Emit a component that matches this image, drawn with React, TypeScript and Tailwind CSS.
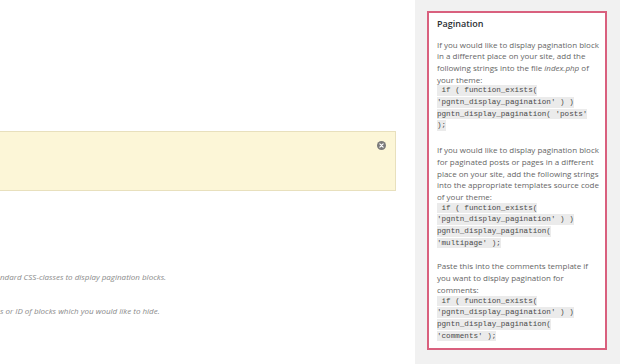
import React from 'react';

const CloseIcon = () => (
  <svg width="9" height="9" viewBox="0 0 10 10">
    <circle cx="5" cy="5" r="5" fill="#7a7a7a" />
    <path d="M3.2 3.2 L6.8 6.8 M6.8 3.2 L3.2 6.8" stroke="#fff" strokeWidth="1.4" strokeLinecap="round" />
  </svg>
);

// each code line is its own block so the pitch stays at 11.7px
const Code: React.FC<{ lines: string[] }> = ({ lines }) => (
  <>
    {lines.map((l, i) => (
      <code
        key={i}
        className="block w-fit whitespace-pre bg-[#ebebeb] text-[#4a4a4a] font-['Liberation_Mono','DejaVu_Sans_Mono',monospace] text-[7.6px] leading-[10.7px] mb-[1px]"
      >
        {l}
      </code>
    ))}
  </>
);

const Lines: React.FC<{ lines: React.ReactNode[] }> = ({ lines }) => (
  <>
    {lines.map((l, i) => (
      <span key={i} className="block whitespace-nowrap leading-[11.7px]">
        {l}
      </span>
    ))}
  </>
);

export default function App() {
  return (
    <div className="flex w-[620px] h-[364px] overflow-hidden bg-white font-['Open_Sans','Noto_Sans',sans-serif]">
      {/* main settings column */}
      <div className="flex-1 flex flex-col">
        <div className="mt-[131px] mr-[19px] h-[60px] bg-[#fcf6d7] border border-[#e8e0bd] border-l-0 flex justify-end pt-[9px] pr-[9px]">
          <CloseIcon />
        </div>
        <p className="mt-[80px] text-[8px] italic text-[#8a8a8a] leading-[12px] whitespace-nowrap">
          ndard CSS-classes to display pagination blocks.
        </p>
        <p className="mt-[22px] text-[8px] italic text-[#8a8a8a] leading-[12px] whitespace-nowrap">
          s or ID of blocks which you would like to hide.
        </p>
      </div>

      {/* sidebar */}
      <div className="w-[205px] bg-[#f1f1f1] pt-[11px] pl-[12px] pr-[13px]">
        <div className="bg-white border-2 border-[#d9607e] pt-[5px] pb-[6px] px-[8px] text-[8px] text-[#666]">
          <h3 className="text-[9px] font-semibold text-[#2b2f33] leading-[12px]">Pagination</h3>
          <div className="mt-[8.5px]">
            <Lines
              lines={[
                'If you would like to display pagination block',
                'in a different place on your site, add the',
                <>
                  following strings into the file <i>index.php</i> of
                </>,
                'your theme:',
              ]}
            />
            <Code
              lines={[
                ' if ( function_exists(',
                "'pgntn_display_pagination' ) )",
                "pgntn_display_pagination( 'posts'",
                ');',
              ]}
            />
          </div>
          <div className="mt-[13px]">
            <Lines
              lines={[
                'If you would like to display pagination block',
                'for paginated posts or pages in a different',
                'place on your site, add the following strings',
                'into the appropriate templates source code',
                'of your theme:',
              ]}
            />
            <Code
              lines={[
                ' if ( function_exists(',
                "'pgntn_display_pagination' ) )",
                'pgntn_display_pagination(',
                "'multipage' );",
              ]}
            />
          </div>
          <div className="mt-[12px]">
            <Lines
              lines={[
                'Paste this into the comments template if',
                'you want to display pagination for',
                'comments:',
              ]}
            />
            <Code
              lines={[
                ' if ( function_exists(',
                "'pgntn_display_pagination' ) )",
                'pgntn_display_pagination(',
                "'comments' );",
              ]}
            />
          </div>
        </div>
      </div>
    </div>
  );
}
